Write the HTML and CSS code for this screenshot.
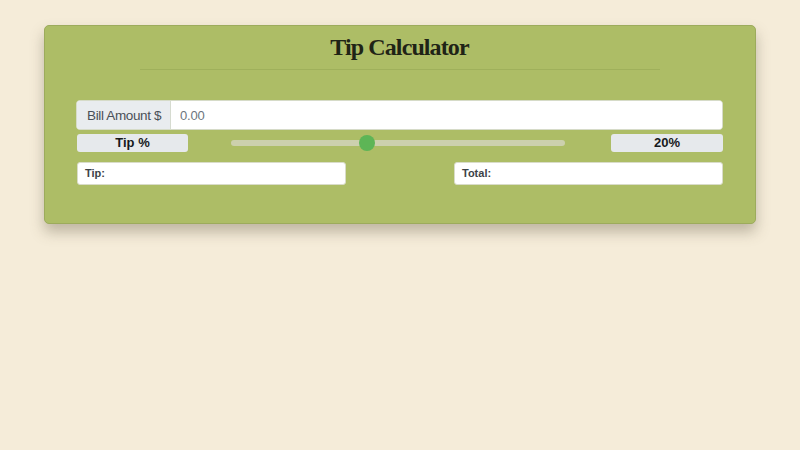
FILE: index.html
```html
<!DOCTYPE html>
<html>
<head>
<meta charset="utf-8">
<link rel="stylesheet" href="styles.css">
</head>
<body>
<div class="card">
  <h1 class="title">Tip Calculator</h1>
  <hr class="rule">
  <div class="bill">
    <span class="bill-label">Bill Amount $</span>
    <input class="bill-input" type="text" placeholder="0.00">
  </div>
  <div class="tip-row">
    <span class="pill">Tip %</span>
    <div class="slider">
      <div class="track"></div>
      <div class="thumb"></div>
    </div>
    <span class="pill">20%</span>
  </div>
  <div class="result-row">
    <div class="result">Tip:</div>
    <div class="result">Total:</div>
  </div>
</div>
</body>
</html>
```
FILE: styles.css
```css
html, body { margin: 0; padding: 0; }
body {
  background: #f5ecd9;
  font-family: "Liberation Sans", Arial, sans-serif;
  width: 800px;
  height: 450px;
}
.card {
  box-sizing: border-box;
  width: 712px;
  height: 199px;
  margin: 25px 0 0 44px;
  background: #adbd66;
  border: 1px solid #9cab5c;
  border-radius: 5px;
  box-shadow: 0 8px 14px rgba(90, 80, 60, 0.35);
  padding: 7px 32px 0 31px;
}
.title {
  margin: 0;
  text-align: center;
  font-family: "Liberation Serif", "Times New Roman", serif;
  font-weight: bold;
  font-size: 24px;
  letter-spacing: -0.9px;
  line-height: 28px;
  color: #1f2416;
}
.rule {
  width: 520px;
  margin: 8px auto 0;
  border: 0;
  border-top: 1px solid #9fb05b;
  height: 0;
}
.bill {
  box-sizing: border-box;
  display: flex;
  margin-top: 30px;
  height: 30px;
  border: 1px solid #d6dbc8;
  border-radius: 4px;
  overflow: hidden;
  background: #fff;
}
.bill-label {
  display: flex;
  align-items: center;
  white-space: nowrap;
  padding: 0 0 0 10px;
  width: 94px;
  box-sizing: border-box;
  background: #e9ecef;
  color: #495057;
  font-size: 13.5px;
  letter-spacing: -0.35px;
  border-right: 1px solid #d6dbd0;
}
.bill-input {
  flex: 1;
  border: 0;
  outline: none;
  padding: 0 9px;
  font-family: inherit;
  font-size: 13px;
  letter-spacing: -0.2px;
  color: #495057;
  background: #fff;
}
.bill-input::placeholder { color: #6c757d; }
.tip-row {
  display: grid;
  grid-template-columns: 112px 1fr 112px;
  align-items: center;
  margin-top: 4px;
  height: 18px;
}
.pill {
  display: block;
  margin-left: 1px;
  height: 18px;
  line-height: 18px;
  background: #e6e9ec;
  border-radius: 3px;
  text-align: center;
  font-weight: bold;
  font-size: 13px;
  color: #16191c;
}
.tip-row .pill:last-child { margin-left: 0; margin-right: 0; }
.slider {
  position: relative;
  height: 18px;
  margin: 0 46px 0 43px;
}
.track {
  position: absolute;
  left: 0; right: 0;
  top: 6px;
  height: 6px;
  border-radius: 3px;
  background: #ccd0ad;
}
.thumb {
  position: absolute;
  left: 128px;
  top: 1px;
  width: 16px;
  height: 16px;
  border-radius: 50%;
  background: #5db556;
}
.result-row {
  display: flex;
  justify-content: space-between;
  margin-top: 10px;
  padding-left: 1px;
}
.result {
  box-sizing: border-box;
  width: 269px;
  height: 23px;
  background: #fff;
  border: 1px solid #d9dcc9;
  border-radius: 3px;
  padding-left: 7px;
  line-height: 21px;
  font-weight: bold;
  font-size: 11px;
  color: #3c4247;
}
```
